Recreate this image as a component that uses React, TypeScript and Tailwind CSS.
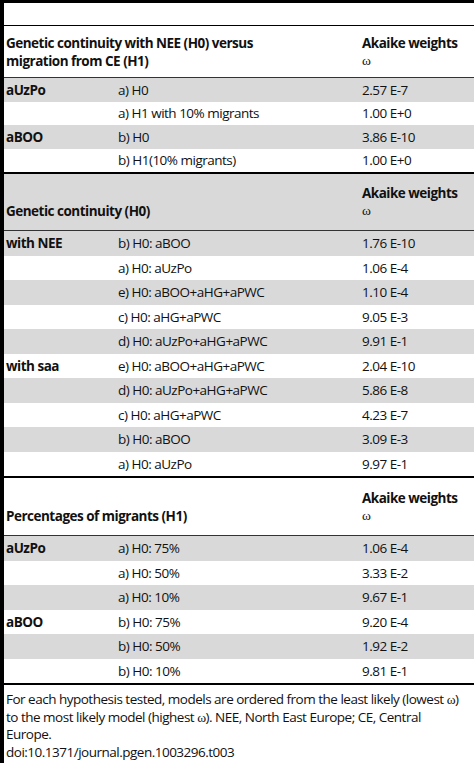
type Row = { label?: string; model: string; w: string };
type Block = { title: string[]; gray: boolean; rows: Row[] };

const blocks: Block[] = [
  {
    title: ["Genetic continuity with NEE (H0) versus", "migration from CE (H1)"],
    gray: false,
    rows: [
      { label: "aUzPo", model: "a) H0", w: "2.57 E-7" },
      { model: "a) H1 with 10% migrants", w: "1.00 E+0" },
      { label: "aBOO", model: "b) H0", w: "3.86 E-10" },
      { model: "b) H1(10% migrants)", w: "1.00 E+0" },
    ],
  },
  {
    title: ["Genetic continuity (H0)"],
    gray: true,
    rows: [
      { label: "with NEE", model: "b) H0: aBOO", w: "1.76 E-10" },
      { model: "a) H0: aUzPo", w: "1.06 E-4" },
      { model: "e) H0: aBOO+aHG+aPWC", w: "1.10 E-4" },
      { model: "c) H0: aHG+aPWC", w: "9.05 E-3" },
      { model: "d) H0: aUzPo+aHG+aPWC", w: "9.91 E-1" },
      { label: "with saa", model: "e) H0: aBOO+aHG+aPWC", w: "2.04 E-10" },
      { model: "d) H0: aUzPo+aHG+aPWC", w: "5.86 E-8" },
      { model: "c) H0: aHG+aPWC", w: "4.23 E-7" },
      { model: "b) H0: aBOO", w: "3.09 E-3" },
      { model: "a) H0: aUzPo", w: "9.97 E-1" },
    ],
  },
  {
    title: ["Percentages of migrants (H1)"],
    gray: false,
    rows: [
      { label: "aUzPo", model: "a) H0: 75%", w: "1.06 E-4" },
      { model: "a) H0: 50%", w: "3.33 E-2" },
      { model: "a) H0: 10%", w: "9.67 E-1" },
      { label: "aBOO", model: "b) H0: 75%", w: "9.20 E-4" },
      { model: "b) H0: 50%", w: "1.92 E-2" },
      { model: "b) H0: 10%", w: "9.81 E-1" },
    ],
  },
];

const omega = { fontFamily: '"Liberation Serif", serif' };
const headH = ["h-[52px]", "h-[57px]", "h-[58px]"];
const rowH = ["h-[23.5px]", "h-[24.5px]", "h-[24.5px]"];

export default function App() {
  return (
    <div
      className="h-[763px] w-[474px] overflow-hidden border-l-[4px] border-t-[3px] border-black bg-white text-[13.5px] tracking-[-0.5px] text-[#111]"
      style={{ fontFamily: '"Open Sans", "Noto Sans", sans-serif' }}
    >
      <div className="h-[22px]" />
      <div className="border-t border-black">
        {blocks.map((b, bi) => (
          <div key={bi} className={bi > 0 ? "border-t-2 border-black" : ""}>
            <div
              className={`grid grid-cols-[356px_1fr] items-center border-b border-[#333] pl-[2px] font-bold leading-[18px] ${headH[bi]} ${
                b.gray ? "bg-[#d9d9d9]" : ""
              }`}
            >
              <div className={b.title.length === 1 ? "self-end pb-[10px]" : ""}>
                {b.title.map(t => (
                  <div key={t}>{t}</div>
                ))}
              </div>
              <div>
                <div>Akaike weights</div>
                <div className="font-normal" style={omega}>ω</div>
              </div>
            </div>
            {b.rows.map((r, ri) => (
              <div
                key={ri}
                className={`grid grid-cols-[112px_244px_1fr] items-center pl-[2px] leading-[18px] ${rowH[bi]} ${
                  ri % 2 === 0 ? "bg-[#d9d9d9]" : ""
                }`}
              >
                <div className="font-bold">{r.label}</div>
                <div>{r.model}</div>
                <div>{r.w}</div>
              </div>
            ))}
          </div>
        ))}
      </div>
      <div className="border-t-2 border-black pl-[2px] pt-[6px] leading-[17.5px]">
        <p className="whitespace-nowrap">
          For each hypothesis tested, models are ordered from the least likely (lowest <span style={omega}>ω</span>)
        </p>
        <p>
          to the most likely model (highest <span style={omega}>ω</span>). NEE, North East Europe; CE, Central
        </p>
        <p>Europe.</p>
        <p>doi:10.1371/journal.pgen.1003296.t003</p>
      </div>
    </div>
  );
}
